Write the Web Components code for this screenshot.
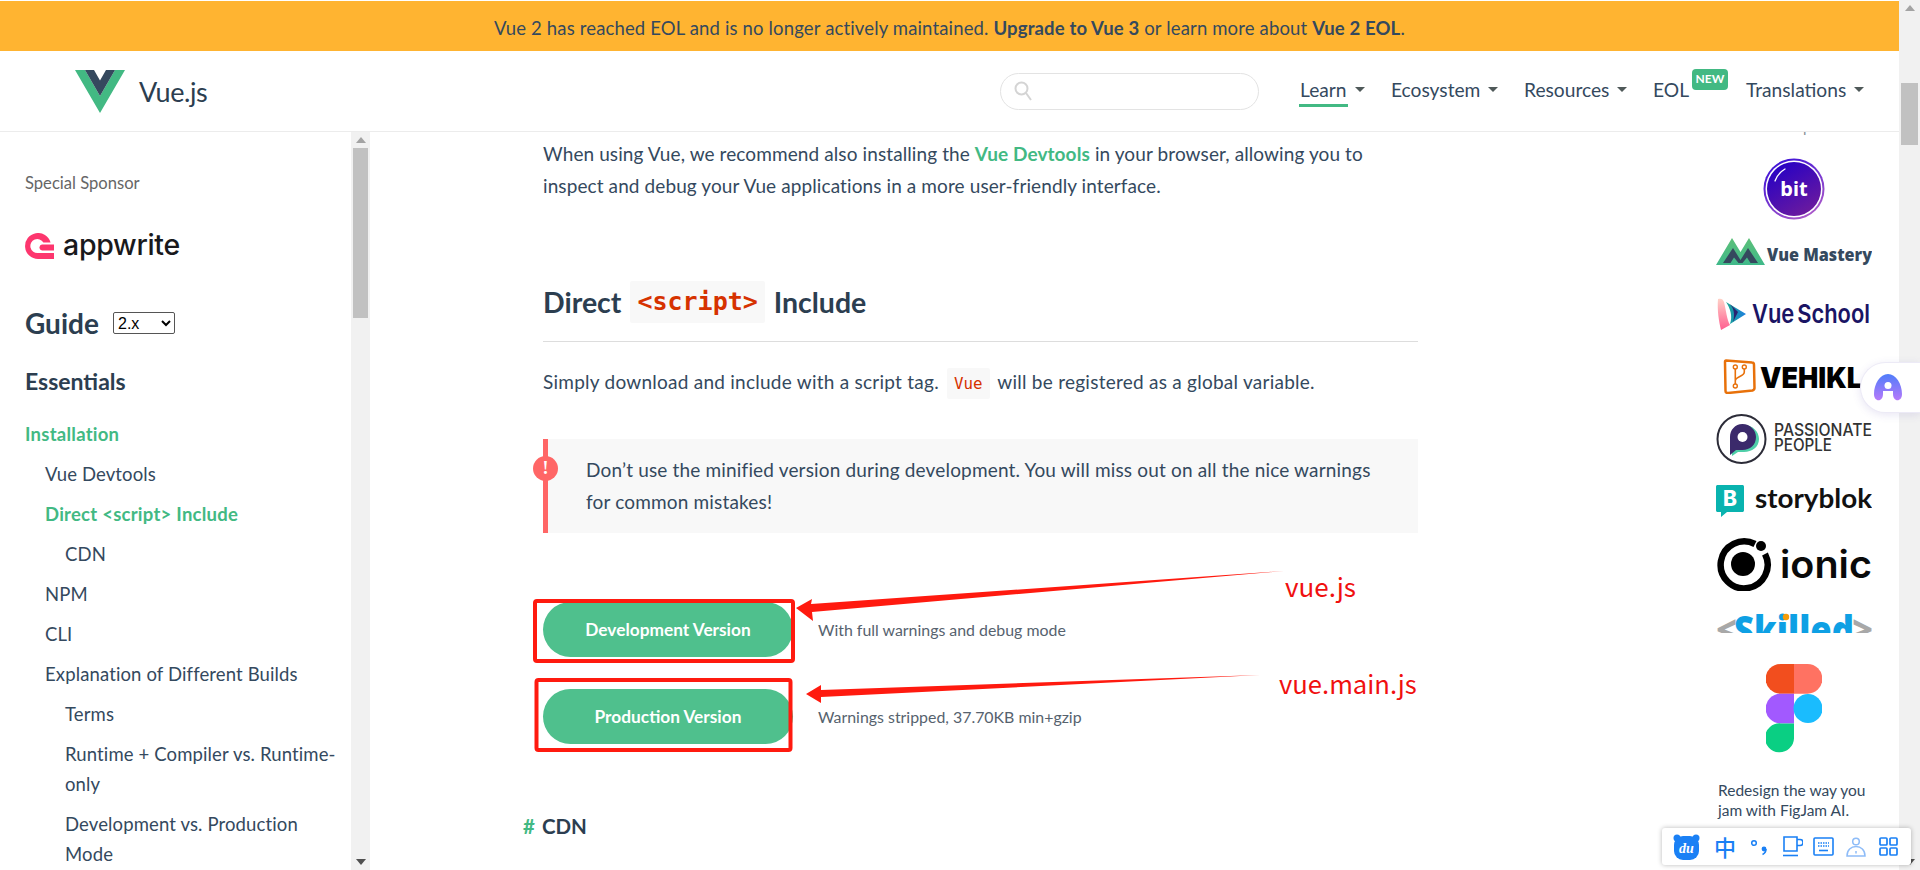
<!DOCTYPE html>
<html lang="en">
<head>
<meta charset="utf-8">
<title>Installation — Vue.js</title>
<style>
  html, body { margin: 0; height: 870px; overflow: hidden; background: #fff; }
  body { font-family: Lato, "Noto Sans", sans-serif; color: #34495e; position: relative; }
  #frame { display: flex; height: 870px; }
  #left { flex: 1; min-width: 0; display: flex; flex-direction: column; padding-top: 1px; box-sizing: border-box; }
  #row { flex: 1; min-height: 0; display: flex; }
</style>
</head>
<body>
<div id="frame">
  <div id="left">
    <vue-banner>Vue 2 has reached EOL and is no longer actively maintained. <b>Upgrade to Vue 3</b> or learn more about <b>Vue 2 EOL</b>.</vue-banner>
    <vue-header>
      <nav-item active width="91">Learn</nav-item>
      <nav-item width="133">Ecosystem</nav-item>
      <nav-item width="129">Resources</nav-item>
      <nav-item width="93" plain badge="NEW">EOL</nav-item>
      <nav-item>Translations</nav-item>
    </vue-header>
    <div id="row">
      <side-bar>
        <side-link level="0" active>Installation</side-link>
        <side-link level="1">Vue Devtools</side-link>
        <side-link level="1" active>Direct &lt;script&gt; Include</side-link>
        <side-link level="2">CDN</side-link>
        <side-link level="1">NPM</side-link>
        <side-link level="1">CLI</side-link>
        <side-link level="1">Explanation of Different Builds</side-link>
        <side-link level="2">Terms</side-link>
        <side-link level="2">Runtime + Compiler vs. Runtime-only</side-link>
        <side-link level="2">Development vs. Production Mode</side-link>
      </side-bar>
      <doc-page>
        <doc-tip>Don’t use the minified version during development. You will miss out on all the nice warnings for common mistakes!</doc-tip>
        <dl-row slot="dl" label="Development Version">With full warnings and debug mode</dl-row>
        <dl-row slot="dl" label="Production Version" top="32">Warnings stripped, 37.70KB min+gzip</dl-row>
      </doc-page>
      <ad-column></ad-column>
    </div>
  </div>
  <fake-scroll wide thumb-top="67" thumb-height="62"></fake-scroll>
</div>
<red-notes></red-notes>
<float-pill></float-pill>
<ime-bar></ime-bar>

<script>
class VueBanner extends HTMLElement {
    connectedCallback() {
        this.attachShadow({ mode: 'open' }).innerHTML = `
        <style>
            :host { display: flex; align-items: center; justify-content: center; height: 50px; background: #ffb431; font-size: 18.5px; letter-spacing: .15px; color: #34495e; flex: none; }
            ::slotted(b) { font-weight: 700; }
            div { position: relative; top: 2px; }
        </style>
        <div><slot></slot></div>`;
    }
}
customElements.define('vue-banner', VueBanner);

class NavItem extends HTMLElement {
    connectedCallback() {
        const w = this.getAttribute('width');
        const badge = this.getAttribute('badge');
        const caret = this.hasAttribute('plain') ? '' : '<i></i>';
        this.attachShadow({ mode: 'open' }).innerHTML = `
        <style>
            :host { display: block; flex: none; ${w ? 'width:' + w + 'px;' : ''} }
            div { display: flex; align-items: center; height: 30px; font-size: 19.2px; color: #34495e; position: relative; }
            span { position: relative; display: block; line-height: 30px; }
            :host([active]) span::after { content: ""; position: absolute; left: -1px; right: -1px; bottom: -2px; height: 3px; background: #42b983; }
            i { width: 0; height: 0; margin-left: 8px; border: 5px solid transparent; border-top: 5.5px solid #4f5959; border-bottom: 0; }
            b { margin-left: 3px; width: 36px; height: 21px; margin-top: -20px; border-radius: 4px; background: #42b983; color: #fff; font-size: 12px; line-height: 19px; text-align: center; font-weight: 700; }
        </style>
        <div><span><slot></slot></span>${caret}${badge ? '<b>' + badge + '</b>' : ''}</div>`;
    }
}
customElements.define('nav-item', NavItem);

class VueHeader extends HTMLElement {
    connectedCallback() {
        this.attachShadow({ mode: 'open' }).innerHTML = `
        <style>
            :host { display: flex; align-items: center; height: 81px; box-sizing: border-box; border-bottom: 1px solid #ececec; padding-left: 75px; flex: none; background: #fff; }
            svg.logo { display: block; flex: none; }
            .name { font-size: 27px; font-weight: 400; margin-left: 14px; color: #2c3e50; width: 861px; flex: none; letter-spacing: -.4px; }
            .search { flex: none; width: 259px; height: 37px; box-sizing: border-box; border: 1px solid #e3e3e3; border-radius: 19px; display: flex; align-items: center; padding-left: 13px; margin-right: 41px; }
            nav { display: flex; align-items: center; margin-top: -3px; }
        </style>
        <svg class="logo" width="50" height="43" viewBox="0 0 50 43">
            <path d="M0 0L25 43L50 0H40L25 26L10 0Z" fill="#42b983"/>
            <path d="M10 0L25 26L40 0H31L25 10.5L19 0Z" fill="#35495e"/>
        </svg>
        <div class="name">Vue.js</div>
        <div class="search">
            <svg width="18" height="20" viewBox="0 0 18 20"><circle cx="7.5" cy="7.5" r="6" fill="none" stroke="#d4d4d4" stroke-width="2"/><path d="M12 12L17 19" stroke="#d4d4d4" stroke-width="2"/></svg>
        </div>
        <nav><slot></slot></nav>`;
    }
}
customElements.define('vue-header', VueHeader);

// scrollbar pintada, la de la ventana y la del sidebar
class FakeScroll extends HTMLElement {
    connectedCallback() {
        const top = this.getAttribute('thumb-top');
        const h = this.getAttribute('thumb-height');
        this.attachShadow({ mode: 'open' }).innerHTML = `
        <style>
            :host { display: flex; flex-direction: column; flex: none; width: 19px; background: #f1f1f1; }
            :host([wide]) { width: 21px; }
            .btn { height: 16px; flex: none; display: flex; align-items: center; justify-content: center; }
            .up { width: 0; height: 0; border: 5px solid transparent; border-bottom: 6px solid #a3a3a3; border-top: 0; }
            .down { width: 0; height: 0; border: 5px solid transparent; border-top: 6px solid #505050; border-bottom: 0; }
            .thumb { height: ${h}px; margin: ${top}px 2px 0; background: #c1c1c1; flex: none; }
            .fill { flex: 1; }
        </style>
        <div class="btn"><div class="up"></div></div>
        <div class="thumb"></div>
        <div class="fill"></div>
        <div class="btn"><div class="down"></div></div>`;
    }
}
customElements.define('fake-scroll', FakeScroll);

class SideLink extends HTMLElement {
    connectedCallback() {
        const level = Number(this.getAttribute('level'));
        this.attachShadow({ mode: 'open' }).innerHTML = `
        <style>
            :host { display: block; padding: 5px 6px 5px ${25 + level * 20}px; font-size: 18.5px; letter-spacing: .13px; line-height: 30px; color: #34495e; }
            :host([active]) { color: #42b983; font-weight: 700; letter-spacing: .25px; }
        </style>
        <slot></slot>`;
    }
}
customElements.define('side-link', SideLink);

class SideBar extends HTMLElement {
    connectedCallback() {
        this.attachShadow({ mode: 'open' }).innerHTML = `
        <style>
            :host { display: flex; width: 370px; flex: none; height: 738px; overflow: hidden; }
            .inner { flex: 1; min-width: 0; padding-top: 38px; box-sizing: border-box; height: 738px; overflow: hidden; }
            .sp { padding-left: 25px; font-size: 16.6px; line-height: 26px; color: #666; }
            .app { display: flex; align-items: center; padding-left: 25px; margin-top: 36px; height: 28px; }
            .app span { font-family: Inter, sans-serif; font-weight: 500; font-size: 28.5px; margin-left: 8px; color: #19191c; letter-spacing: -.3px; position: relative; top: -2px; }
            .guide { display: flex; align-items: center; padding-left: 25px; margin-top: 43px; height: 40px; }
            h2 { margin: 0; font-size: 28px; font-weight: 700; color: #2c3e50; width: 88px; line-height: 40px; }
            select { font: 16px "Liberation Sans", sans-serif; width: 62px; height: 22px; padding: 0; background: #fff; border: 1px solid #555; border-radius: 2px; color: #000; }
            h3 { margin: 23px 0 18px; padding-left: 25px; font-size: 23px; font-weight: 700; color: #2c3e50; line-height: 30px; }
        </style>
        <div class="inner">
            <div class="sp">Special Sponsor</div>
            <div class="app">
                <svg width="30" height="26" viewBox="0 0 30 26"><path d="M29 20V26H13A13 13 0 1 1 25.6 9.5H18.4A7 7 0 1 0 13 20Z M29 11.5V17.5H17A3 3 0 0 1 14.5 14A3 3 0 0 1 17 11.5Z" fill="#fd366e"/></svg>
                <span>appwrite</span>
            </div>
            <div class="guide"><h2>Guide</h2><select><option>2.x</option></select></div>
            <h3>Essentials</h3>
            <slot></slot>
        </div>
        <fake-scroll thumb-top="0" thumb-height="170"></fake-scroll>`;
    }
}
customElements.define('side-bar', SideBar);

class DocTip extends HTMLElement {
    connectedCallback() {
        this.attachShadow({ mode: 'open' }).innerHTML = `
        <style>
            :host { display: block; position: relative; margin-top: 40px; background: #f8f8f8; border-left: 5px solid #ff6666; padding: 15px 20px 14px 38px; font-size: 19px; letter-spacing: .17px; line-height: 32.4px; }
            .mark { position: absolute; left: -15px; top: 17px; width: 25px; height: 25px; border-radius: 50%; background: #ff6666; color: #fff; font: 700 18px/25px "Liberation Serif", serif; text-align: center; letter-spacing: 0; }
        </style>
        <div class="mark">!</div>
        <slot></slot>`;
    }
}
customElements.define('doc-tip', DocTip);

class DlRow extends HTMLElement {
    connectedCallback() {
        const label = this.getAttribute('label');
        const top = this.getAttribute('top') || 0;
        this.attachShadow({ mode: 'open' }).innerHTML = `
        <style>
            :host { display: flex; align-items: center; margin-top: ${top}px; }
            .btn { width: 250px; height: 55px; border-radius: 28px; background: #4fc08d; color: #fff; font-weight: 700; font-size: 17.3px; display: flex; align-items: center; justify-content: center; flex: none; }
            .txt { margin-left: 25px; font-size: 15.9px; color: #56626e; }
        </style>
        <div class="btn">${label}</div>
        <div class="txt"><slot></slot></div>`;
    }
}
customElements.define('dl-row', DlRow);

class DocPage extends HTMLElement {
    connectedCallback() {
        this.attachShadow({ mode: 'open' }).innerHTML = `
        <style>
            :host { display: block; flex: 1; min-width: 0; height: 738px; overflow: hidden; padding-left: 173px; box-sizing: border-box; }
            .col { width: 875px; padding-top: 6px; }
            p { margin: 0; font-size: 19px; letter-spacing: .1px; line-height: 32.4px; }
            p a { color: #42b983; font-weight: 700; }
            h2 { margin: 78px 0 0; padding-bottom: 18px; border-bottom: 1px solid #ddd; font-size: 28.5px; font-weight: 700; color: #2c3e50; line-height: 42px; }
            h2 code { display: inline-block; background: #f8f8f8; color: #d63200; border-radius: 2px; font: 600 25px/42px "DejaVu Sans Mono", monospace; padding: 0 7px; margin: 0 2px; vertical-align: top; }
            h2 + p { margin-top: 24px; letter-spacing: .25px; }
            p code { display: inline-block; background: #f8f8f8; color: #d63200; font: 15.8px/31px "DejaVu Sans Mono", monospace; letter-spacing: 0; padding: 0 7px; margin: 0 3px; border-radius: 2px; }
            .dl { margin-top: 69px; }
            h3 { margin: 67px 0 0 -20px; font-size: 20.5px; font-weight: 700; color: #2c3e50; line-height: 30px; }
            h3 span { color: #42b983; margin-right: 7px; }
        </style>
        <div class="col">
            <p>When using Vue, we recommend also installing the <a>Vue Devtools</a> in your browser, allowing you to inspect and debug your Vue applications in a more user-friendly interface.</p>
            <h2>Direct <code>&lt;script&gt;</code> Include</h2>
            <p>Simply download and include with a script tag. <code>Vue</code> will be registered as a global variable.</p>
            <slot></slot>
            <div class="dl"><slot name="dl"></slot></div>
            <h3><span>#</span>CDN</h3>
        </div>`;
    }
}
customElements.define('doc-page', DocPage);

class AdColumn extends HTMLElement {
    connectedCallback() {
        this.attachShadow({ mode: 'open' }).innerHTML = `
        <style>
            :host { display: block; width: 199px; flex: none; height: 738px; overflow: hidden; box-sizing: border-box; padding-left: 16px; }
            .col { width: 156px; margin-top: -16px; display: flex; flex-direction: column; align-items: center; }
            .head { height: 20px; line-height: 20px; font-size: 15px; color: #8a8f96; white-space: nowrap; }
            svg { display: block; flex: none; }
            text { font-family: Inter, sans-serif; }
            .copy { width: 156px; margin-top: 27px; font-size: 15.5px; line-height: 20px; padding-left: 2px; box-sizing: border-box; white-space: nowrap; }
        </style>
        <div class="col">
            <div class="head">Platinum Sponsors</div>

            <svg style="margin-top:22px" width="62" height="62" viewBox="0 0 62 62">
                <defs>
                    <linearGradient id="bitA" x1="0.2" y1="0" x2="0.8" y2="1"><stop offset="0" stop-color="#2400c6"/><stop offset="1" stop-color="#6f1c9c"/></linearGradient>
                    <linearGradient id="bitB" x1="0.2" y1="0" x2="0.8" y2="1"><stop offset="0" stop-color="#3a10d8"/><stop offset="1" stop-color="#b05cc8"/></linearGradient>
                </defs>
                <circle cx="31" cy="31" r="30.5" fill="url(#bitB)"/>
                <circle cx="31" cy="31" r="28.5" fill="#fff"/>
                <circle cx="31" cy="31" r="27" fill="url(#bitA)"/>
                <path d="M12 23A22 22 0 0 1 22 11" fill="none" stroke="#fff" stroke-width="1.3" stroke-linecap="round"/>
                <text x="31" y="38" text-anchor="middle" font-size="20" font-weight="700" fill="#fff" style="font-family:'Noto Sans',sans-serif">bit</text>
            </svg>

            <svg style="margin-top:18px" width="156" height="28" viewBox="0 0 156 28">
                <defs><linearGradient id="vm" x1="0" y1="0" x2="0" y2="1"><stop offset="0" stop-color="#5cbf78"/><stop offset="1" stop-color="#3fb98a"/></linearGradient></defs>
                <path d="M0 27L16 0L24.5 14L33 0L49 27Z" fill="url(#vm)"/>
                <path d="M7 25L17 10L24.5 22L32 10L42 25H34.5L31 19.5L26.5 25H22.5L18 19.5L14.5 25Z" fill="#35495e"/>
                <text x="51" y="23" font-size="17" font-weight="800" fill="#35495e" textLength="105" lengthAdjust="spacingAndGlyphs" style="font-family:'Open Sans',sans-serif">Vue Mastery</text>
            </svg>

            <svg style="margin-top:32px" width="156" height="32" viewBox="0 0 156 32">
                <defs>
                    <linearGradient id="vsA" x1="0" y1="0" x2="0" y2="1"><stop offset="0" stop-color="#ffd3c8"/><stop offset="1" stop-color="#ff5d8f"/></linearGradient>
                    <linearGradient id="vsB" x1="0" y1="0" x2="1" y2="0"><stop offset="0" stop-color="#17a58e"/><stop offset="1" stop-color="#1f7fe0"/></linearGradient>
                </defs>
                <path d="M2 1C5 0 7 1 8 4C10 12 11 22 14 27L5 32C3 24 1 12 2 1Z" fill="url(#vsA)"/>
                <path d="M10 4L30 16L14 26C17 18 14 10 10 4Z" fill="url(#vsB)"/>
                <path d="M14 6L22 14L17 24C19 16 18 11 14 6Z" fill="#2a2370"/>
                <text x="36" y="25" font-size="26" font-weight="600" fill="#1a1464" word-spacing="-3" textLength="118" lengthAdjust="spacingAndGlyphs">Vue School</text>
            </svg>

            <svg style="margin-top:29px" width="156" height="35" viewBox="0 0 156 35">
                <path d="M10 1.500L36 3.500C37.500 3.500 38 4.500 38 6L38.500 29C38.500 30.500 38 31 36.500 31.500L12 34C10 34 9.500 33.500 9.500 32L9 3C9 2 9.500 1.500 10 1.500Z" fill="none" stroke="#e8710a" stroke-width="2.500" stroke-linejoin="round"/>
                <path d="M19.300 9V26M28.300 9V13C28.300 18 19.300 17 19.300 22" fill="none" stroke="#e8710a" stroke-width="1.600"/>
                <circle cx="19.300" cy="8" r="2" fill="#fff" stroke="#e8710a" stroke-width="1.400"/>
                <circle cx="28.300" cy="8" r="2" fill="#fff" stroke="#e8710a" stroke-width="1.400"/>
                <circle cx="19.300" cy="27" r="2" fill="#fff" stroke="#e8710a" stroke-width="1.400"/>
                <text x="44" y="29" font-size="29" font-weight="900" fill="#000" textLength="102" lengthAdjust="spacingAndGlyphs">VEHIKL</text>
            </svg>

            <svg style="margin-top:20px" width="156" height="50" viewBox="0 0 156 50">
                <circle cx="25.5" cy="25" r="24" fill="none" stroke="#2c2c38" stroke-width="2"/>
                <path d="M28 11C37 11 43 18 43 25C43 33 36 38 28 38H22L16 42L15 25C15 18 20 11 28 11Z" fill="#4fcfa8"/>
                <path d="M26.5 10C34 10 40 16 40 23C40 31 34 36 26.5 36H20L14 41V23C14 16 19 10 26.5 10Z" fill="#3b2a6b"/>
                <circle cx="26.5" cy="23" r="5" fill="#fff"/>
                <text x="58" y="22" font-size="17" font-weight="500" fill="#333" textLength="98" lengthAdjust="spacingAndGlyphs">PASSIONATE</text>
                <text x="58" y="37" font-size="17" font-weight="500" fill="#333" textLength="58" lengthAdjust="spacingAndGlyphs">PEOPLE</text>
            </svg>

            <svg style="margin-top:21px" width="156" height="32" viewBox="0 0 156 32">
                <path d="M2 0H26C27.500 0 28 .5 28 2V25C28 26.500 27.500 27 26 27H11L5 32V27H2C.5 27 0 26.500 0 25V2C0 .5 .5 0 2 0Z" fill="#09b3af"/>
                <text x="14" y="21" text-anchor="middle" font-size="21" font-weight="800" fill="#fff">B</text>
                <text x="39" y="23" font-size="26" font-weight="700" fill="#111" textLength="117" lengthAdjust="spacingAndGlyphs" style="font-family:Lato,sans-serif">storyblok</text>
            </svg>

            <svg style="margin-top:20px" width="156" height="54" viewBox="0 0 156 54">
                <path d="M39 7A23.500 23.500 0 1 0 49 17" fill="none" stroke="#000" stroke-width="6.500"/>
                <circle cx="45" cy="9" r="5" fill="#000"/>
                <circle cx="27" cy="27" r="12" fill="#000"/>
                <text x="64" y="41" font-size="38" font-weight="600" fill="#0a0a0a" textLength="92" lengthAdjust="spacingAndGlyphs">ionic</text>
            </svg>

            <svg style="margin-top:22px" width="156" height="20" viewBox="0 0 156 20">
                <defs><linearGradient id="sk" x1="0" y1="0" x2="0" y2="1"><stop offset=".72" stop-color="#0ea0e4"/><stop offset=".72" stop-color="#0a74c2"/></linearGradient></defs>
                <text x="0" y="29" font-size="36" font-weight="800" fill="#a8a8a8" style="font-family:'Open Sans',sans-serif">&lt;</text>
                <text x="18" y="32" font-size="40" font-weight="800" fill="url(#sk)" textLength="120" lengthAdjust="spacingAndGlyphs" style="font-family:'Open Sans',sans-serif">Skilled</text>
                <circle cx="70" cy="4" r="3.200" fill="#f59c0a"/>
                <text x="136" y="29" font-size="36" font-weight="800" fill="#a8a8a8" style="font-family:'Open Sans',sans-serif">&gt;</text>
            </svg>

            <svg style="margin-top:31px" width="56" height="89" viewBox="0 0 56 89">
                <path d="M28 0H14.500A14.500 14.500 0 0 0 14.500 29.700H28Z" fill="#f24e1e"/>
                <path d="M28 0H41.500A14.500 14.500 0 0 1 41.500 29.700H28Z" fill="#ff7262"/>
                <path d="M28 29.700H14.500A14.500 14.500 0 0 0 14.500 59.400H28Z" fill="#a259ff"/>
                <circle cx="42" cy="44.500" r="14.500" fill="#1abcfe"/>
                <path d="M14.500 59.400H28V74.500A14.500 14.500 0 1 1 14.500 59.400Z" fill="#0acf83"/>
            </svg>

            <div class="copy">Redesign the way you<br>jam with FigJam AI.</div>
        </div>`;
    }
}
customElements.define('ad-column', AdColumn);

// anotaciones rojas pintadas encima de la captura
class RedNotes extends HTMLElement {
    connectedCallback() {
        this.attachShadow({ mode: 'open' }).innerHTML = `
        <style>
            :host { position: absolute; left: 0; top: 0; width: 1920px; height: 870px; pointer-events: none; }
            svg { display: block; }
            text { font-family: "Noto Sans CJK SC", "Noto Sans", sans-serif; fill: #f01010; }
        </style>
        <svg width="1920" height="870" viewBox="0 0 1920 870">
            <rect x="535" y="601" width="258" height="60" rx="2" fill="none" stroke="#ff1a0f" stroke-width="4"/>
            <rect x="536.500" y="680" width="254" height="70" rx="2" fill="none" stroke="#ff1a0f" stroke-width="4"/>
            <path d="M796 608L812 599L811 604L1284 571L812 612L813 621Z" fill="#ff1a0f"/>
            <path d="M806 694L821 685L821 690L1260 675L821 697L821 703Z" fill="#ff1a0f"/>
            <text x="1285" y="597" font-size="26">vue.js</text>
            <text x="1279" y="694" font-size="25.6">vue.main.js</text>
        </svg>`;
    }
}
customElements.define('red-notes', RedNotes);

class FloatPill extends HTMLElement {
    connectedCallback() {
        this.attachShadow({ mode: 'open' }).innerHTML = `
        <style>
            :host { position: absolute; left: 1860px; top: 362px; width: 60px; height: 51px; box-sizing: border-box; background: #fff; border: 1px solid #eceaf6; border-right: 0; border-radius: 26px 0 0 26px; box-shadow: 0 2px 8px rgba(90,80,180,.14); display: flex; align-items: center; padding-left: 13px; }
        </style>
        <svg width="28" height="27" viewBox="0 0 28 27">
            <defs><linearGradient id="pill" x1="0" y1="0" x2="0" y2="1"><stop offset="0" stop-color="#4f7dfa"/><stop offset="1" stop-color="#b679fa"/></linearGradient></defs>
            <path d="M14 0C22 0 28 10 28 20C28 25 25 27 22 26C20 25 19 23 19 20V17H9V20C9 23 8 25 6 26C3 27 0 25 0 20C0 10 6 0 14 0Z" fill="url(#pill)"/>
            <circle cx="14" cy="11.500" r="3.500" fill="#fff"/>
        </svg>`;
    }
}
customElements.define('float-pill', FloatPill);

class ImeBar extends HTMLElement {
    connectedCallback() {
        this.attachShadow({ mode: 'open' }).innerHTML = `
        <style>
            :host { position: absolute; left: 1662px; top: 828px; width: 249px; height: 37px; box-sizing: border-box; background: #fff; border-radius: 3px; box-shadow: 0 0 5px rgba(0,0,0,.28); display: grid; grid-template-columns: 47px 32px 36px 30px 32px 34px 30px; align-items: center; }
            div { display: flex; justify-content: center; align-items: center; height: 37px; color: #1a80f5; }
            svg { display: block; }
            .zh { font: 500 22px/37px "Noto Sans CJK SC", sans-serif; }
        </style>
        <div style="padding-left:2px">
            <svg width="27" height="26" viewBox="0 0 27 26">
                <circle cx="4" cy="4" r="3.500" fill="#1a80f5"/><circle cx="23" cy="4" r="3.500" fill="#1a80f5"/>
                <rect x="1" y="2" width="25" height="24" rx="9" fill="#1a80f5"/>
                <text x="13.500" y="19" text-anchor="middle" font-size="14" font-weight="700" font-style="italic" fill="#fff" style="font-family:'Liberation Serif',serif">du</text>
            </svg>
        </div>
        <div class="zh">中</div>
        <div>
            <svg width="18" height="18" viewBox="0 0 18 18"><circle cx="4" cy="5" r="2.300" fill="none" stroke="#1a80f5" stroke-width="1.500"/><circle cx="14" cy="11" r="2.400" fill="#1a80f5"/><path d="M16 11C16 14 14.500 15.500 12.500 16.500" fill="none" stroke="#1a80f5" stroke-width="1.600"/></svg>
        </div>
        <div>
            <svg width="21" height="21" viewBox="0 0 21 21" fill="none" stroke="#1a80f5" stroke-width="1.600"><path d="M2 1H15V15H2ZM15 3.500H18A2 2 0 0 1 18 9.500H15"/><path d="M1 19.500H16"/></svg>
        </div>
        <div>
            <svg width="21" height="19" viewBox="0 0 21 19"><rect x="1" y="1" width="19" height="17" rx="1" fill="none" stroke="#1a80f5" stroke-width="1.600"/><path d="M5 6H16M5 9H16" stroke="#1a80f5" stroke-width="1.600" stroke-dasharray="1.500 1"/><path d="M6 13.500H15" stroke="#1a80f5" stroke-width="1.600"/></svg>
        </div>
        <div>
            <svg width="20" height="20" viewBox="0 0 20 20" fill="none" stroke="#8ebcf8" stroke-width="1.500"><circle cx="10" cy="4.500" r="3.300"/><path d="M1 19C1 13 5 9.500 10 9.500S19 13 19 19Z"/><path d="M10 14V16.500"/></svg>
        </div>
        <div>
            <svg width="19" height="19" viewBox="0 0 19 19" fill="none" stroke="#1a80f5" stroke-width="1.700"><rect x="1" y="1" width="7" height="7" rx="1"/><rect x="11" y="1" width="7" height="7" rx="1"/><rect x="1" y="11" width="7" height="7" rx="1"/><rect x="11" y="11" width="7" height="7" rx="1"/></svg>
        </div>`;
    }
}
customElements.define('ime-bar', ImeBar);
</script>
</body>
</html>
